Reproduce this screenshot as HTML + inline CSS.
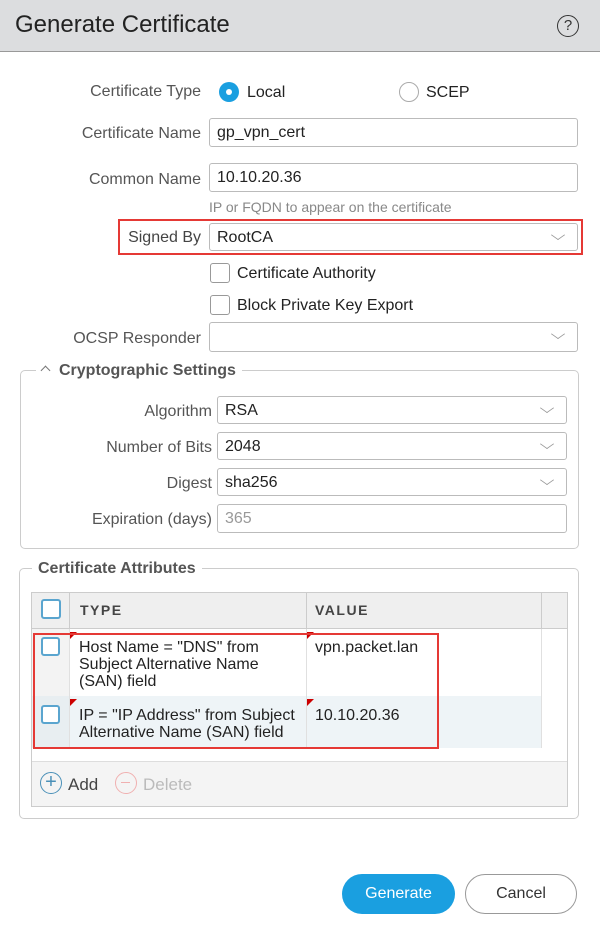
<!DOCTYPE html><html><head><style>
*{box-sizing:border-box;margin:0;padding:0}
body{width:600px;height:939px;background:#fff;font-family:"Liberation Sans",sans-serif;position:relative;overflow:hidden;color:#222}
.a{position:absolute}
.lbl{position:absolute;color:#555;font-size:16px;text-align:right}
.in{position:absolute;border:1px solid #bbb;border-radius:3px;background:#fff;font-size:16px;padding:5px 7px;color:#222}
.dd::after{content:"";position:absolute;right:14px;top:6px;width:9px;height:9px;border-right:1.3px solid #999;border-bottom:1.3px solid #999;transform:scaleY(0.7) rotate(45deg)}
.cb{position:absolute;width:20px;height:20px;border:1.5px solid #999;border-radius:3px;background:#fff}
.bcb{position:absolute;width:19px;height:19px;border:2px solid #5aa5cf;border-radius:3px;background:#fff}
fieldset{position:absolute;border:1px solid #ccc;border-radius:5px}
.leg{position:absolute;background:#fff;padding:0 6px;font-size:16px;font-weight:bold;color:#555}
.tri{position:absolute;width:0;height:0;border-top:7px solid #c00;border-right:7px solid transparent}
</style></head><body>
<div class="a" style="left:0;top:0;width:600px;height:52px;background:#dcdddf;border-bottom:1px solid #999"></div>
<div class="a" style="left:15px;top:11px;font-size:24px;color:#222">Generate Certificate</div>
<div class="a" style="left:557px;top:15px;width:22px;height:22px;border:1.5px solid #333;border-radius:50%;font-size:15px;text-align:center;line-height:19px;color:#333">?</div>

<div class="lbl" style="right:399px;top:83px">Certificate Type</div>
<div class="a" style="left:219px;top:82px;width:20px;height:20px;border-radius:50%;background:#1a9fe0"><div class="a" style="left:7px;top:7px;width:6px;height:6px;border-radius:50%;background:#fff"></div></div>
<div class="a" style="left:247px;top:84px;font-size:16px">Local</div>
<div class="a" style="left:399px;top:82px;width:20px;height:20px;border-radius:50%;border:1px solid #aaa"></div>
<div class="a" style="left:426px;top:84px;font-size:16px">SCEP</div>

<div class="lbl" style="right:399px;top:125px">Certificate Name</div>
<div class="in" style="left:209px;top:118px;width:369px;height:29px">gp_vpn_cert</div>
<div class="lbl" style="right:399px;top:171px">Common Name</div>
<div class="in" style="left:209px;top:163px;width:369px;height:29px">10.10.20.36</div>
<div class="a" style="left:209px;top:199px;font-size:14px;color:#888">IP or FQDN to appear on the certificate</div>

<div class="a" style="left:118px;top:219px;width:465px;height:36px;border:2px solid #e53935"></div>
<div class="lbl" style="right:399px;top:229px;color:#444">Signed By</div>
<div class="in dd" style="left:209px;top:223px;width:369px;height:28px">RootCA</div>
<div class="cb" style="left:210px;top:263px"></div>
<div class="a" style="left:237px;top:265px;font-size:16px">Certificate Authority</div>
<div class="cb" style="left:210px;top:295px"></div>
<div class="a" style="left:237px;top:297px;font-size:16px">Block Private Key Export</div>
<div class="lbl" style="right:399px;top:330px">OCSP Responder</div>
<div class="in dd" style="left:209px;top:322px;width:369px;height:30px"></div>

<fieldset style="left:20px;top:370px;width:559px;height:179px"></fieldset>
<div class="leg" style="left:36px;top:362px"><span style="display:inline-block;width:7px;height:7px;border-left:1.5px solid #777;border-top:1.5px solid #777;transform:rotate(45deg);margin:0 10px 1px 0"></span>Cryptographic Settings</div>
<div class="lbl" style="right:388px;top:403px">Algorithm</div>
<div class="in dd" style="left:217px;top:396px;width:350px;height:28px">RSA</div>
<div class="lbl" style="right:388px;top:439px">Number of Bits</div>
<div class="in dd" style="left:217px;top:432px;width:350px;height:28px">2048</div>
<div class="lbl" style="right:388px;top:475px">Digest</div>
<div class="in dd" style="left:217px;top:468px;width:350px;height:28px">sha256</div>
<div class="lbl" style="right:388px;top:511px">Expiration (days)</div>
<div class="in" style="left:217px;top:504px;width:350px;height:29px;color:#999">365</div>

<fieldset style="left:19px;top:568px;width:560px;height:251px"></fieldset>
<div class="leg" style="left:32px;top:560px">Certificate Attributes</div>
<div class="a" style="left:31px;top:592px;width:537px;height:215px;border:1px solid #ccc;background:#fff"></div>
<div class="a" style="left:32px;top:593px;width:535px;height:36px;background:#efefef;border-bottom:1px solid #ccc"></div>
<div class="a" style="left:69px;top:593px;height:36px;border-left:1px solid #ccc"></div>
<div class="a" style="left:306px;top:593px;height:36px;border-left:1px solid #ccc"></div>
<div class="a" style="left:541px;top:593px;height:36px;border-left:1px solid #ccc"></div>
<div class="bcb" style="left:41px;top:599px;width:20px;height:20px"></div>
<div class="a" style="left:80px;top:602px;font-size:14px;font-weight:bold;letter-spacing:1.5px;color:#444">TYPE</div>
<div class="a" style="left:315px;top:602px;font-size:14px;font-weight:bold;letter-spacing:1.5px;color:#444">VALUE</div>
<div class="a" style="left:32px;top:696px;width:509px;height:52px;background:#eef4f7"></div>
<div class="a" style="left:32px;top:629px;width:37px;height:119px;background:#f3f3f3"></div>
<div class="a" style="left:32px;top:696px;width:37px;height:52px;background:#e8eef1"></div>
<div class="a" style="left:306px;top:629px;height:119px;border-left:1px solid #e0e0e0"></div>
<div class="a" style="left:69px;top:629px;height:119px;border-left:1px solid #e0e0e0"></div>
<div class="a" style="left:541px;top:629px;height:119px;border-left:1px solid #e0e0e0"></div>
<div class="bcb" style="left:41px;top:637px"></div>
<div class="bcb" style="left:41px;top:705px"></div>
<div class="tri" style="left:70px;top:632px"></div><div class="tri" style="left:307px;top:632px"></div>
<div class="tri" style="left:70px;top:699px"></div><div class="tri" style="left:307px;top:699px"></div>
<div class="a" style="left:79px;top:639px;font-size:16px;line-height:17px;width:225px">Host Name = "DNS" from Subject Alternative Name (SAN) field</div>
<div class="a" style="left:315px;top:639px;font-size:16px">vpn.packet.lan</div>
<div class="a" style="left:79px;top:707px;font-size:16px;line-height:17px;width:230px">IP = "IP Address" from Subject Alternative Name (SAN) field</div>
<div class="a" style="left:315px;top:707px;font-size:16px">10.10.20.36</div>
<div class="a" style="left:33px;top:633px;width:406px;height:116px;border:2px solid #e53935"></div>
<div class="a" style="left:32px;top:761px;width:535px;height:45px;background:#f4f4f4;border-top:1px solid #ddd"></div>
<div class="a" style="left:40px;top:772px;width:22px;height:22px;border:1.5px solid #4a90b8;border-radius:50%;color:#4a90b8;text-align:center;line-height:19px;font-size:20px">+</div>
<div class="a" style="left:68px;top:775px;font-size:17px;color:#444">Add</div>
<div class="a" style="left:115px;top:772px;width:22px;height:22px;border:1.5px solid #f0b0b0;border-radius:50%"><div class="a" style="left:5px;top:9px;width:9px;border-top:1.5px solid #f0b0b0"></div></div>
<div class="a" style="left:143px;top:775px;font-size:17px;color:#bbb">Delete</div>

<div class="a" style="left:342px;top:874px;width:113px;height:40px;border-radius:20px;background:#1a9fe0;color:#fff;font-size:16px;text-align:center;line-height:40px">Generate</div>
<div class="a" style="left:465px;top:874px;width:112px;height:40px;border-radius:20px;border:1px solid #999;color:#333;font-size:16px;text-align:center;line-height:38px">Cancel</div>
</body></html>
